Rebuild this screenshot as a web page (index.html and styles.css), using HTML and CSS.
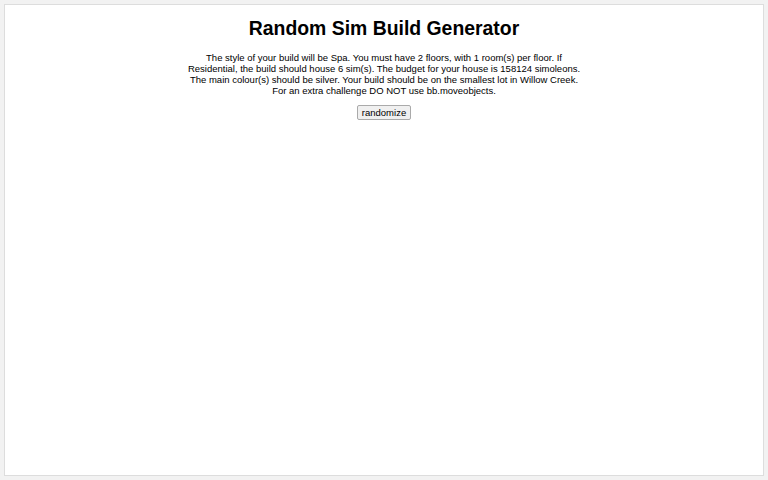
FILE: index.html
```html
<!DOCTYPE html>
<html lang="en">
<head>
    <meta charset="UTF-8">
    <meta name="viewport" content="width=device-width, initial-scale=1.0">
    <title>Random Sim Build Generator</title>
    <link rel="stylesheet" href="styles.css">
</head>
<body>
    <div class="main">
        <h1>Random Sim Build Generator</h1>
        <p id="buildText" class="build">The style of your build will be Spa. You must have 2 floors, with 1 room(s) per floor. If Residential, the build should house 6 sim(s). The budget for your house is 158124 simoleons. The main colour(s) should be silver. Your build should be on the smallest lot in Willow Creek. For an extra challenge DO NOT use bb.moveobjects.</p>
        <button type="button" class="roll">randomize</button>
    </div>
</body>
</html>
```

FILE: styles.css
```css
body {
    font-family: 'Liberation Sans', Arial, sans-serif;
    margin: 0px;
    padding: 4px;
    background-color: #f2f2f2;
    color: #000000;
    text-align: center;
}

.main {
    box-sizing: border-box;
    height: 472px;
    background-color: #ffffff;
    border: 1px solid #dddddd;
    padding-top: 12px;
}

h1 {
    font-size: 19.4px;
    line-height: 22px;
    margin: 0 0 13px 0;
}

.build {
    font-size: 9.5px;
    line-height: 11px;
    max-width: 402px;
    margin: 0 auto 6px auto;
}

.roll {
    font-family: 'Liberation Sans', Arial, sans-serif;
    font-size: 9.5px;
    padding: 1px 4px;
    background-color: #f0f0f0;
    border: 1px solid #aaaaaa;
    border-radius: 2px;
}
```
